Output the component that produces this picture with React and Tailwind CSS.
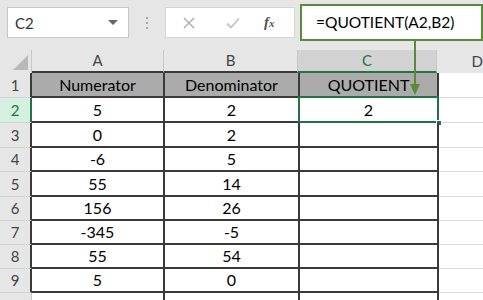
const COLS = [
  { key: "A", w: "w-[133px]" },
  { key: "B", w: "w-[135px]" },
  { key: "C", w: "w-[139px]" },
];

const ROWS = [
  { n: 1, h: "h-[25px]", cells: ["Numerator", "Denominator", "QUOTIENT"] },
  { n: 2, h: "h-[25px]", cells: ["5", "2", "2"] },
  { n: 3, h: "h-[25px]", cells: ["0", "2", ""] },
  { n: 4, h: "h-[24px]", cells: ["-6", "5", ""] },
  { n: 5, h: "h-[25px]", cells: ["55", "14", ""] },
  { n: 6, h: "h-[24px]", cells: ["156", "26", ""] },
  { n: 7, h: "h-[24px]", cells: ["-345", "-5", ""] },
  { n: 8, h: "h-[24px]", cells: ["55", "54", ""] },
  { n: 9, h: "h-[24px]", cells: ["5", "0", ""] },
  { n: 10, h: "h-[24px]", cells: ["", "", ""] },
];

const FormulaBar = () => (
  <div className="flex h-[50px] items-start bg-[#e6e6e6]">
    <div className="ml-[7px] mt-[7px] flex h-[31px] w-[122px] items-center justify-between border border-[#c6c6c6] bg-white pl-[7px] pr-[10px] text-[15px] text-[#333]">
      <span className="mt-[2px]">C2</span>
      <span className="h-0 w-0 border-x-[5px] border-t-[5px] border-x-transparent border-t-[#666]" />
    </div>
    <div className="ml-[17px] mt-[17px] flex flex-col gap-[3px]">
      <span className="h-[2px] w-[2px] bg-[#a6a6a6]" />
      <span className="h-[2px] w-[2px] bg-[#a6a6a6]" />
      <span className="h-[2px] w-[2px] bg-[#a6a6a6]" />
    </div>
    <div className="ml-[17px] mt-[7px] flex h-[31px] w-[130px] items-center border border-[#d4d4d4] bg-white">
      <svg className="ml-[17px]" width="12" height="12" viewBox="0 0 12 12">
        <path d="M1 1L11 11M11 1L1 11" stroke="#ababab" strokeWidth="1.4" />
      </svg>
      <svg className="ml-[31px]" width="14" height="12" viewBox="0 0 14 12">
        <path d="M1 6.5L5 10.5L13 1.5" stroke="#c4c4c4" strokeWidth="1.8" fill="none" />
      </svg>
      <span className="ml-[24px] font-['Liberation_Serif',serif] text-[15px] font-bold italic text-[#555]">
        f<span className="text-[11px]">x</span>
      </span>
    </div>
    <div className="ml-[5px] mt-[4px] flex h-[37px] flex-1 items-center border-2 border-[#5b8a3a] bg-white pl-[14px] text-[15.5px] text-black">
      <span className="mt-[1px]">=QUOTIENT(A2,B2)</span>
    </div>
  </div>
);

const ColumnHeaders = () => (
  <div className="flex h-[23px] bg-[#e6e6e6] text-[15px] text-[#444]">
    <div className="relative w-[32px] border-r border-[#c8c8c8]">
      <span className="absolute bottom-[3px] right-[3px] h-0 w-0 border-b-[15px] border-l-[15px] border-b-[#b9b9b9] border-l-transparent" />
    </div>
    {COLS.map((c) =>
      c.key === "C" ? (
        <div
          key={c.key}
          className={`${c.w} flex items-center justify-center border-b-2 border-r border-[#217346] border-r-[#c8c8c8] bg-[#d2d2d2] text-[#217346]`}
        >
          {c.key}
        </div>
      ) : (
        <div
          key={c.key}
          className={`${c.w} flex items-center justify-center border-b-2 border-r border-[#3a3a3a] border-r-[#c8c8c8]`}
        >
          {c.key}
        </div>
      )
    )}
    <div className="flex flex-1 items-center pl-[35px]">D</div>
  </div>
);

const Row = ({ row }) => {
  const active = row.n === 2;
  const inTable = row.n <= 9;
  let head = "border-r border-r-[#c8c8c8] bg-[#e6e6e6] text-[#444]";
  if (active) head = "border-r-2 border-r-[#217346] bg-[#d3f0e0] text-[#217346]";
  else if (inTable) head = "border-r-2 border-r-[#3a3a3a] bg-[#e6e6e6] text-[#444]";
  return (
    <div className={`flex ${row.h}`}>
      <div className={`flex w-[32px] items-center justify-center border-b border-[#d4d4d4] text-[15px] ${head}`}>
        {inTable ? row.n : ""}
      </div>
      {COLS.map((c, i) => {
        const selected = active && c.key === "C";
        return (
          <div
            key={c.key}
            className={`${c.w} relative flex items-center justify-center text-[16px] text-black ${
              inTable ? "border-b-2 border-r-2 border-[#3a3a3a]" : "border-r-2 border-[#3a3a3a]"
            } ${row.n === 1 ? "bg-[#ababab]" : "bg-white"}`}
          >
            {row.cells[i]}
            {selected && (
              <>
                <span className="absolute -left-[2px] -top-[2px] bottom-[-2px] right-[-2px] border-2 border-[#217346]" />
                <span className="absolute bottom-[-5px] right-[-5px] h-[6px] w-[6px] border border-white bg-[#217346]" />
              </>
            )}
          </div>
        );
      })}
      <div className="flex-1 border-b border-[#dadada] bg-white" />
    </div>
  );
};

export default function App() {
  return (
    <div className="relative h-[300px] w-[483px] overflow-hidden bg-white font-['Lato','Liberation_Sans',sans-serif]">
      <FormulaBar />
      <ColumnHeaders />
      {ROWS.map((r) => (
        <Row key={r.n} row={r} />
      ))}
      {/* arrow from the formula bar down to the result cell */}
      <div className="absolute left-[414px] top-[41px] h-[45px] w-[2px] bg-[#5b8a3a]" />
      <span className="absolute left-[410px] top-[84px] h-0 w-0 border-x-[5px] border-t-[11px] border-x-transparent border-t-[#5b8a3a]" />
    </div>
  );
}
